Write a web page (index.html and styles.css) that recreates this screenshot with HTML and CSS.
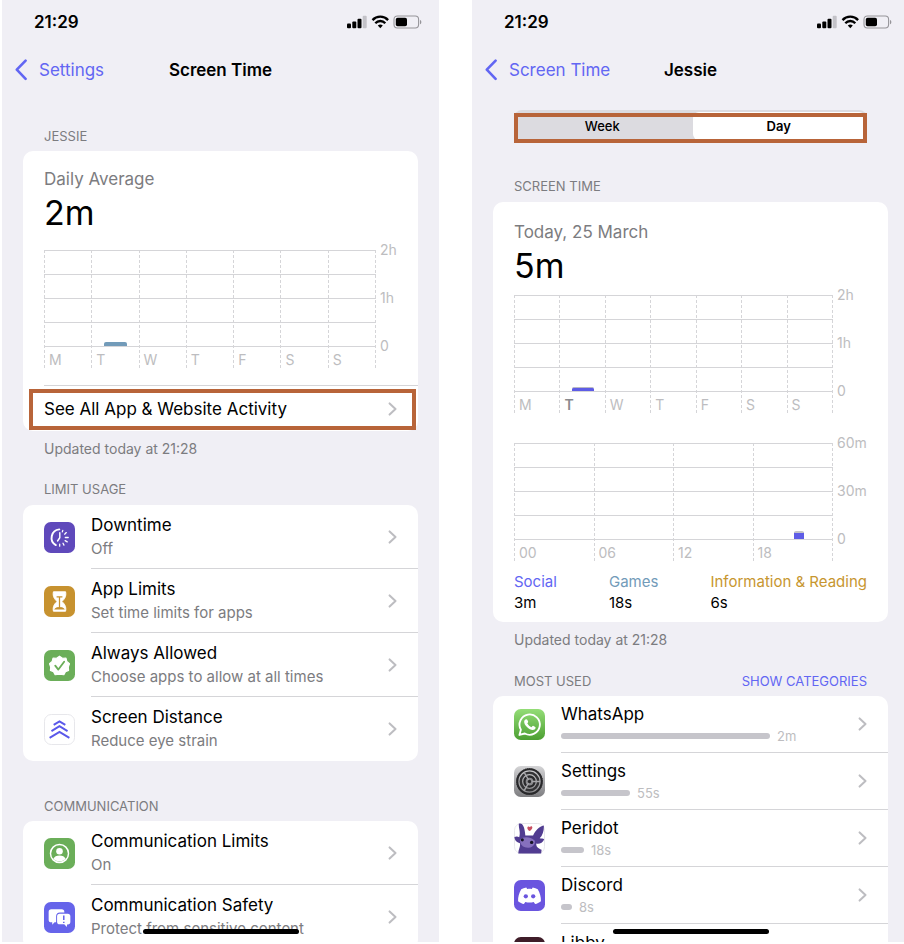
FILE: index.html
```
<!DOCTYPE html>
<html lang="en">
<head>
  <meta charset="UTF-8" />
  <meta name="viewport" content="width=device-width, initial-scale=1.0"/>
  <title>Screen Time</title>
  <link rel="stylesheet" href="styles.css">
</head>
<body>
<!-- shared symbols -->
<svg class="symbols" aria-hidden="true">
  <symbol id="status" viewBox="0 0 76 14">
    <rect x="0" y="8.6" width="4" height="4.6" rx="1"/>
    <rect x="5.3" y="6.4" width="4" height="6.8" rx="1"/>
    <rect x="10.5" y="3.7" width="4" height="9.5" rx="1"/>
    <rect x="15.7" y="0.8" width="4" height="12.4" rx="1" fill="#c3c2c8"/>
    <g fill="none" stroke="#000" stroke-width="2.3">
      <path d="M25.5 5.1a10.7 10.7 0 0 1 15.6 0"/>
      <path d="M28.3 8.2a6.8 6.8 0 0 1 10 0"/>
    </g>
    <path d="M30.8 10.6a3.6 3.6 0 0 1 5 0l-2.5 2.7z"/>
    <rect x="47" y="1" width="24.6" height="12" rx="3.4" fill="none" stroke="#96959a" stroke-width="1.1"/>
    <rect x="48.8" y="2.7" width="11.2" height="8.6" rx="1.8"/>
    <path d="M73 5v4.2c1.8-.5 1.8-3.7 0-4.2z" fill="#96959a"/>
  </symbol>
  <symbol id="back" viewBox="0 0 12 22">
    <path d="M10.6 1.6L1.8 10.7l8.8 9.1" fill="none" stroke="#6266f3" stroke-width="2.6" stroke-linecap="round" stroke-linejoin="round"/>
  </symbol>
  <symbol id="chevron" viewBox="0 0 10 14">
    <path d="M1.6 1.4L7.5 7l-5.9 5.6" fill="none" stroke="#bdbdc1" stroke-width="2" stroke-linecap="round" stroke-linejoin="round"/>
  </symbol>
</svg>

<main class="phones">
  <section class="screen">
    <header class="status">
      <span>21:29</span>
      <svg class="status-icons" aria-label="Signal, Wi-Fi, battery"><use href="#status"/></svg>
    </header>
    <nav class="nav">
      <a class="back" href="#settings"><svg><use href="#back"/></svg>Settings</a>
      <h1>Screen Time</h1>
    </nav>

    <h2 class="heading first">Jessie</h2>
    <div class="card">
      <div class="summary">
        <p class="period">Daily Average</p>
        <p class="total">2m</p>
        <div class="chart average">
          <div class="lines"><i></i><i></i><i></i><i></i></div>
          <ol class="columns">
            <li>M</li>
            <li><b class="bar blue"></b>T</li>
            <li>W</li>
            <li>T</li>
            <li>F</li>
            <li>S</li>
            <li>S</li>
          </ol>
          <div class="scale"><span>2h</span><span>1h</span><span>0</span></div>
        </div>
      </div>
      <a class="all-activity" href="#activity">
        <span>See All App &amp; Website Activity</span>
        <svg class="chevron"><use href="#chevron"/></svg>
      </a>
    </div>
    <p class="updated">Updated today at 21:28</p>

    <h2 class="heading limits">Limit usage</h2>
    <div class="card list">
      <a class="row" href="#downtime">
        <svg class="icon" viewBox="0 0 32 32">
          <rect width="32" height="32" rx="7" fill="#5f49bb"/>
          <g fill="none" stroke="#fff" stroke-linecap="round">
            <path d="M15.8 7.600A8.700 8.700 0 0 0 12.200 23.800" stroke-width="2"/>
            <path d="M16.300 11.200v5L14 19.600" stroke-width="1.500"/>
            <path d="M19.400 8.600l-.5 1.600M23 10.900l-1.700 1.700M22 16h3M21.800 19.200l2.200 1.300M19.600 21.900l1 2M16.200 22.800v2.200" stroke-width="1.300"/>
          </g>
        </svg>
        <span class="body"><span class="text"><strong>Downtime</strong><small>Off</small></span><svg class="chevron"><use href="#chevron"/></svg></span>
      </a>
      <a class="row" href="#app-limits">
        <svg class="icon" viewBox="0 0 32 32">
          <rect width="32" height="32" rx="7" fill="#c7922f"/>
          <path d="M9.700 6h12.600c.9 5-1.200 7.500-3.800 10 2.600 2.500 4.700 5 3.800 10H9.700c-.9-5 1.200-7.500 3.800-10C10.900 13.500 8.800 11 9.700 6z" fill="#fff" stroke="#fff" stroke-linejoin="round"/>
          <path d="M13 11.300h6M16 11.500v11M12 23.500c1.500-1.600 6.500-1.600 8 0z" fill="#c7922f" stroke="#c7922f" stroke-width="1.300"/>
        </svg>
        <span class="body"><span class="text"><strong>App Limits</strong><small>Set time limits for apps</small></span><svg class="chevron"><use href="#chevron"/></svg></span>
      </a>
      <a class="row" href="#always-allowed">
        <svg class="icon" viewBox="0 0 32 32">
          <rect width="32" height="32" rx="7" fill="#6bae59"/>
          <path d="M16 6.400l3 2.100 3.700-.1.900 3.500 2.700 2.300-1.200 3.300.3 3.500-3.200 1.300-1.700 3.200-4.500-.5-4.500.5-1.700-3.200-3.200-1.300.3-3.500-1.200-3.300 2.700-2.300.9-3.500 3.700.1z" fill="#fff" stroke="#fff" stroke-width="1.200" stroke-linejoin="round"/>
          <path d="M11.600 16.200l3.200 4 6-8" fill="none" stroke="#6bae59" stroke-width="1.900" stroke-linecap="round" stroke-linejoin="round"/>
        </svg>
        <span class="body"><span class="text"><strong>Always Allowed</strong><small>Choose apps to allow at all times</small></span><svg class="chevron"><use href="#chevron"/></svg></span>
      </a>
      <a class="row" href="#screen-distance">
        <svg class="icon" viewBox="0 0 32 32">
          <rect x=".5" y=".5" width="31" height="31" rx="7" fill="#fff" stroke="#e6e6ea"/>
          <path d="M10 11.300l6-3.600 6 3.600M7.700 17.600l8.300-5 8.300 5M5.800 24.600L16 18.500l10.200 6.100" fill="none" stroke="#5a58ea" stroke-width="2"/>
        </svg>
        <span class="body"><span class="text"><strong>Screen Distance</strong><small>Reduce eye strain</small></span><svg class="chevron"><use href="#chevron"/></svg></span>
      </a>
    </div>

    <h2 class="heading communication">Communication</h2>
    <div class="card list">
      <a class="row" href="#communication-limits">
        <svg class="icon" viewBox="0 0 32 32">
          <rect width="32" height="32" rx="7" fill="#6bae59"/>
          <circle cx="16" cy="16" r="9.300" fill="none" stroke="#fff" stroke-width="1.500"/>
          <circle cx="16" cy="13.600" r="3.400" fill="#fff"/>
          <path d="M9.700 21.500c1.500-4.600 11.100-4.600 12.600 0-3.300 3.600-9.300 3.600-12.600 0z" fill="#fff"/>
        </svg>
        <span class="body"><span class="text"><strong>Communication Limits</strong><small>On</small></span><svg class="chevron"><use href="#chevron"/></svg></span>
      </a>
      <a class="row" href="#communication-safety">
        <svg class="icon" viewBox="0 0 32 32">
          <rect width="32" height="32" rx="7" fill="#6664ea"/>
          <path d="M7.500 7.500h10.800a2.700 2.700 0 0 1 2.700 2.700v.6h-4.500a4 4 0 0 0-4 4v6.200h-1.600L8.500 23.600V21H7.500a2.700 2.700 0 0 1-2.700-2.700v-8.100a2.700 2.700 0 0 1 2.700-2.700z" fill="#fff"/>
          <path d="M16.200 12h8.300a2.700 2.700 0 0 1 2.700 2.700v5.700a2.700 2.700 0 0 1-2.700 2.700h-.8v2.600L20.900 23h-4.700a2.700 2.700 0 0 1-2.700-2.700v-5.600a2.700 2.700 0 0 1 2.700-2.700z" fill="#fff"/>
          <path d="M20.400 14v4.600M20.400 20.300v1.400" stroke="#6664ea" stroke-width="1.600"/>
        </svg>
        <span class="body"><span class="text"><strong>Communication Safety</strong><small>Protect from sensitive content</small></span><svg class="chevron"><use href="#chevron"/></svg></span>
      </a>
    </div>
    <div class="home-bar"></div>
  </section>

  <section class="screen">
    <header class="status">
      <span>21:29</span>
      <svg class="status-icons" aria-label="Signal, Wi-Fi, battery"><use href="#status"/></svg>
    </header>
    <nav class="nav">
      <a class="back" href="#screen-time"><svg><use href="#back"/></svg>Screen Time</a>
      <h1>Jessie</h1>
    </nav>

    <div class="segmented">
      <label><input type="radio" name="range" value="week">Week</label>
      <label><input type="radio" name="range" value="day" checked>Day</label>
    </div>

    <h2 class="heading usage">Screen time</h2>
    <div class="card">
      <div class="summary today">
        <p class="period">Today, 25 March</p>
        <p class="total">5m</p>
        <div class="chart">
          <div class="lines"><i></i><i></i><i></i><i></i></div>
          <ol class="columns">
            <li>M</li>
            <li class="current"><b class="bar"></b>T</li>
            <li>W</li>
            <li>T</li>
            <li>F</li>
            <li>S</li>
            <li>S</li>
          </ol>
          <div class="scale"><span>2h</span><span>1h</span><span>0</span></div>
        </div>
        <div class="chart">
          <div class="lines"><i></i><i></i><i></i><i></i></div>
          <ol class="columns">
            <li>00</li>
            <li>06</li>
            <li>12</li>
            <li><b class="bar hour"></b>18</li>
          </ol>
          <div class="scale"><span>60m</span><span>30m</span><span>0</span></div>
        </div>
        <dl class="legend">
          <div><dt class="social">Social</dt><dd>3m</dd></div>
          <div><dt class="games">Games</dt><dd>18s</dd></div>
          <div><dt class="reading">Information &amp; Reading</dt><dd>6s</dd></div>
        </dl>
      </div>
    </div>
    <p class="updated">Updated today at 21:28</p>

    <div class="heading most-used">
      <h2>Most used</h2>
      <button type="button">Show categories</button>
    </div>
    <div class="card list apps">
      <a class="row" href="#whatsapp">
        <svg class="icon" viewBox="0 0 32 32">
          <defs><linearGradient id="wa" x2="0" y2="1"><stop stop-color="#94dd77"/><stop offset="1" stop-color="#4c9f32"/></linearGradient></defs>
          <rect width="32" height="32" rx="7" fill="url(#wa)"/>
          <path d="M5.600 26.800l1.500-5.500a10.500 10.500 0 1 1 4.100 4z" fill="none" stroke="#fff" stroke-width="1.900" stroke-linejoin="round"/>
          <path d="M12.300 10.700c.9-.5 1.500.2 2.300 2.400.2.700-.8 1.300-.9 1.700 1 2 2.500 3.300 4.300 4 .7-.3 1.100-1.500 1.700-1.400l2.300 1.200c.6.400.2 2-.8 2.600-3.700 2.200-10.900-3.900-10.700-8 0-1 .6-2 1.800-2.500z" fill="#fff"/>
        </svg>
        <span class="body"><span class="text"><strong>WhatsApp</strong><span class="usage-line"><i style="width: 209px"></i>2m</span></span><svg class="chevron"><use href="#chevron"/></svg></span>
      </a>
      <a class="row" href="#settings-app">
        <svg class="icon" viewBox="0 0 32 32">
          <defs><linearGradient id="st" x2="0" y2="1"><stop stop-color="#d4d4d6"/><stop offset="1" stop-color="#7d7d80"/></linearGradient></defs>
          <rect width="32" height="32" rx="7" fill="url(#st)"/>
          <circle cx="16" cy="16" r="12.600" fill="none" stroke="#28282a" stroke-width="2.200"/>
          <circle cx="16" cy="16" r="13.400" fill="none" stroke="#28282a" stroke-width="1" stroke-dasharray="1 1"/>
          <circle cx="16" cy="16" r="9" fill="none" stroke="#333335" stroke-width="2.600"/>
          <circle cx="16" cy="16" r="5.200" fill="#8b8b8e" stroke="#29292b" stroke-width="2.400"/>
          <path d="M16 16h11M16 16L10.500 6.500M16 16l-5.500 9.500" stroke="#a6a6a9" stroke-width="1.500"/>
          <circle cx="16" cy="16" r="1.800" fill="#29292b"/>
        </svg>
        <span class="body"><span class="text"><strong>Settings</strong><span class="usage-line"><i style="width: 69px"></i>55s</span></span><svg class="chevron"><use href="#chevron"/></svg></span>
      </a>
      <a class="row" href="#peridot">
        <svg class="icon" viewBox="0 0 32 32">
          <rect x=".5" y=".5" width="31" height="31" rx="7" fill="#fff" stroke="#e6e6ea"/>
          <path d="M5 .8c3-1.200 6 1.200 6.700 12.200l8-.1C22 7.500 26 3.800 30.800 2.500c.3 5-1 10-4.300 13.300 1.700.6 3.500 0 4.700.9-1.500 4-5.300 5.300-8.200 4.500-.2 3.300 1.300 4.800 5.500 6.500l-.5 3.800H4.500c-.3-4 2.500-6.700 1.600-10.500C2.500 20 .5 17.500.4 14.500c1.700-.8 3.600-.8 5 .2C7 9 4.600 5.500 5 .8z" fill="#513c91"/>
          <path d="M6.500 17c2.500-3.300 10.500-3.300 14.500.8 1.800 2-.4 7.500-6 7.700-6.500.2-9.500-4.500-8.500-8.500z" fill="#8670bd"/>
          <circle cx="8.600" cy="17.400" r="1.600" fill="#171426"/>
          <circle cx="18.200" cy="20" r="1.700" fill="#171426"/>
          <path d="M16.200 8.300c-4.200-2.500-2.200-6.300.2-4.200 2-2.400 4.700 1-.2 4.200z" fill="#c94f60"/>
        </svg>
        <span class="body"><span class="text"><strong>Peridot</strong><span class="usage-line"><i style="width: 23px"></i>18s</span></span><svg class="chevron"><use href="#chevron"/></svg></span>
      </a>
      <a class="row" href="#discord">
        <svg class="icon" viewBox="0 0 32 32">
          <rect width="32" height="32" rx="7" fill="#6a55df"/>
          <path d="M12.700 7.800c-2 .3-3.800.9-5.200 1.700C5.300 13 4 17.500 4.200 22c2 1.600 4 2.400 6 2.900l1.500-2.300c2.800.7 5.800.7 8.600 0l1.500 2.300c2-.5 4-1.300 6-2.900.2-4.500-1.100-9-3.300-12.500-1.400-.8-3.200-1.400-5.200-1.700l-.9 1.500c-1.600-.2-3.200-.2-4.800 0z" fill="#fff"/>
          <circle cx="12.200" cy="16.800" r="2.200" fill="#6a55df"/>
          <circle cx="19.800" cy="16.800" r="2.200" fill="#6a55df"/>
        </svg>
        <span class="body"><span class="text"><strong>Discord</strong><span class="usage-line"><i style="width: 11px"></i>8s</span></span><svg class="chevron"><use href="#chevron"/></svg></span>
      </a>
      <a class="row" href="#libby">
        <svg class="icon" viewBox="0 0 32 32"><rect width="32" height="32" rx="7" fill="#3f1d29"/></svg>
        <span class="body"><span class="text"><strong>Libby</strong><span class="usage-line"></span></span></span>
      </a>
    </div>
    <div class="home-bar"></div>
  </section>
</main>
</body>
</html>
```
FILE: styles.css
```
:root {
  --bg: #f0eff5;
  --accent: #6266f3;
  --bar: #5e5ce6;
  --muted: #7c7c80;
  --faint: #bdbdc0;
  --line: #d5d5d8;
  --mark: #b86439;
}
* {
  box-sizing: border-box;
}
body {
  margin: 0;
  background: #fff;
  color: #000;
  font-family: Inter, "Liberation Sans", sans-serif;
  font-size: 17px;
  overflow: hidden;
}
h1, h2, p, ol, dl, dd {
  margin: 0;
  padding: 0;
}
a {
  color: inherit;
  text-decoration: none;
}
.symbols {
  display: none;
}

/* two phones side by side, the second one runs off the right edge */
.phones {
  display: grid;
  grid-template-columns: 1fr 1fr;
  gap: 33px;
  margin: 0 -5px 2px 2px;
  height: calc(100vh - 2px);
}
.screen {
  position: relative;
  background: var(--bg);
  padding: 0 21px;
  overflow: hidden;
}
.status {
  display: flex;
  justify-content: space-between;
  align-items: center;
  height: 44px;
  margin-right: -5px;
  padding-left: 11px;
  font-weight: 600;
}
.status-icons {
  width: 76px;
  height: 14px;
}
.nav {
  display: grid;
  grid-template-columns: 1fr auto 1fr;
  align-items: center;
  height: 52px;
  margin: 0 -8px;
}
.nav h1 {
  font-size: 17px;
  font-weight: 600;
}
.back {
  display: flex;
  align-items: center;
  gap: 12px;
  color: var(--accent);
}
.back svg {
  width: 12px;
  height: 22px;
}

.heading {
  padding: 0 21px;
  font-size: 13px;
  font-weight: 400;
  line-height: 20px;
  text-transform: uppercase;
  color: var(--muted);
}
.heading.first {
  margin: 30px 0 5px;
}
.heading.limits {
  margin: 20px 0 6px;
}
.heading.communication {
  margin: 35px 0 5px;
}
.heading.usage {
  margin: 34px 0 6px;
}
.heading.most-used {
  display: flex;
  justify-content: space-between;
  margin: 21px 0 5px;
}
.most-used h2 {
  font: inherit;
}
.most-used button {
  border: 0;
  padding: 0;
  background: none;
  font: inherit;
  text-transform: inherit;
  color: var(--accent);
  cursor: pointer;
}
.updated {
  padding: 8px 21px 0;
  font-size: 14px;
  line-height: 20px;
  color: var(--muted);
}

.card {
  background: #fff;
  border-radius: 10px;
}
.summary {
  padding: 16px 21px 0;
}
.summary.today {
  padding: 18px 21px 9px;
}
.period {
  line-height: 24px;
  color: var(--muted);
}
.total {
  font-size: 34px;
  line-height: 44px;
}

.chart {
  display: grid;
  grid-template-columns: 1fr 34px;
  height: 117px;
  margin-top: 7px;
  font-size: 14px;
  color: var(--faint);
}
.chart.average {
  grid-template-columns: 1fr 21px;
  margin-top: 15px;
}
.chart + .chart {
  margin-top: 31px;
}
.lines, .columns {
  grid-area: 1 / 1;
}
.lines {
  height: 97px;
  border-bottom: 1px solid var(--line);
}
.lines i {
  display: block;
  height: 24px;
  border-top: 1px solid var(--line);
}
.columns {
  display: flex;
  list-style: none;
  border-right: 1px dashed var(--line);
}
.columns li {
  position: relative;
  flex: 1;
  padding: 102px 0 0 4px;
  border-left: 1px dashed var(--line);
  line-height: 16px;
}
.columns .current {
  font-weight: 600;
  color: #8a8a8e;
}
.bar {
  position: absolute;
  top: 92px;
  left: 25%;
  width: 50%;
  height: 4px;
  border-top: 1px solid #b9b9c4;
  border-radius: 2px 2px 0 0;
  background: var(--bar);
}
.bar.blue {
  border: 0;
  background: #729bb9;
}
.bar.hour {
  top: 88px;
  left: 52%;
  width: 12%;
  height: 8px;
  border-top: 2px solid #c3c3c8;
}
.scale {
  display: flex;
  flex-direction: column;
  justify-content: space-between;
  height: 112px;
  margin-top: -8px;
  padding-left: 4px;
  line-height: 16px;
}

.all-activity {
  position: relative;
  display: flex;
  justify-content: space-between;
  align-items: center;
  height: 46px;
  margin: 18px 0 0 21px;
  padding-right: 20px;
  border-top: 1px solid var(--line);
}
/* highlight frame over the row */
.all-activity::after {
  content: "";
  position: absolute;
  inset: 3px 2px 1px -15px;
  border: 4px solid var(--mark);
}
.chevron {
  flex: none;
  width: 10px;
  height: 14px;
}

.list {
  overflow: hidden;
}
.row {
  display: flex;
  align-items: center;
  gap: 16px;
  height: 64px;
  padding-left: 21px;
}
.icon {
  flex: none;
  width: 31px;
  height: 31px;
}
.body {
  display: flex;
  flex: 1;
  justify-content: space-between;
  align-items: center;
  height: 100%;
  padding-right: 20px;
  border-bottom: 1px solid var(--line);
}
.row:last-child .body {
  border-bottom: 0;
}
.text {
  display: flex;
  flex-direction: column;
  white-space: nowrap;
}
.text strong {
  font-weight: 400;
  line-height: 24px;
}
.text small {
  font-size: 15px;
  line-height: 24px;
  color: var(--muted);
}
.apps .row {
  height: 57px;
}
.usage-line {
  display: flex;
  align-items: center;
  gap: 7px;
  height: 20px;
  font-size: 13px;
  color: var(--faint);
}
.usage-line i {
  height: 6px;
  border-radius: 3px;
  background: #c6c5cb;
}

.segmented {
  position: relative;
  display: grid;
  grid-template-columns: 1fr 1fr;
  height: 32px;
  margin: 14px 21px 0;
  border-radius: 8px;
  background: #dcdbe0;
}
.segmented label {
  display: flex;
  justify-content: center;
  align-items: center;
  margin: 2px;
  border-radius: 6px;
  font-size: 13px;
  font-weight: 500;
  cursor: pointer;
}
.segmented label:has(:checked) {
  background: #fff;
  font-weight: 600;
}
.segmented input {
  position: absolute;
  opacity: 0;
}
.segmented::after {
  content: "";
  position: absolute;
  inset: 3px 0 -1px;
  border: 4px solid var(--mark);
  pointer-events: none;
}

.legend {
  display: flex;
  justify-content: space-between;
  margin-top: 11px;
  font-size: 15px;
  line-height: 21px;
}
.social {
  color: var(--accent);
}
.games {
  color: #729bb9;
}
.reading {
  color: #c7962f;
}

.home-bar {
  position: absolute;
  left: 50%;
  bottom: 8px;
  width: 156px;
  height: 5px;
  margin-left: -78px;
  border-radius: 3px;
  background: #000;
}
```
